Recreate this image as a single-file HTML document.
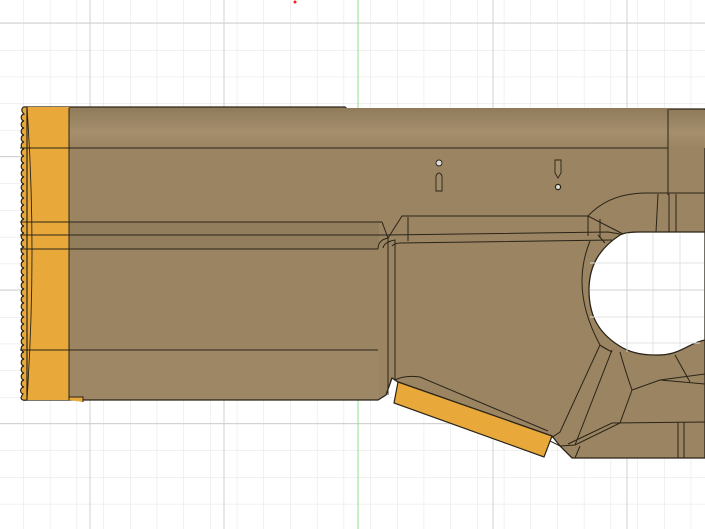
<!DOCTYPE html>
<html><head><style>
html,body{margin:0;padding:0;background:#fff;}
svg{display:block}
</style></head><body>
<svg width="705" height="529" viewBox="0 0 705 529" xmlns="http://www.w3.org/2000/svg">
<defs>
<pattern id="g" width="26.7" height="26.7" patternUnits="userSpaceOnUse" x="-3.5" y="-3.4">
<path d="M0,0 H26.7 M0,0 V26.7" stroke="#e3e3e3" stroke-width="1" fill="none"/>
</pattern>
<linearGradient id="top" x1="0" y1="0" x2="0" y2="1">
<stop offset="0" stop-color="#8f7a5a"/><stop offset="0.6" stop-color="#a58f6d"/><stop offset="1" stop-color="#9a8462"/>
</linearGradient>
</defs>
<rect width="705" height="529" fill="#fff"/>
<rect width="705" height="529" fill="url(#g)"/>
<g stroke="#d2d2d2" stroke-width="1">
<line x1="90" y1="0" x2="90" y2="529"/><line x1="224" y1="0" x2="224" y2="529"/>
<line x1="493" y1="0" x2="493" y2="529"/><line x1="627" y1="0" x2="627" y2="529"/>
<line x1="0" y1="290" x2="705" y2="290"/><line x1="0" y1="156.5" x2="705" y2="156.5"/><line x1="0" y1="423.5" x2="705" y2="423.5"/><line x1="0" y1="23" x2="705" y2="23"/>
</g>
<line x1="358" y1="0" x2="358" y2="529" stroke="#8fe08f" stroke-width="1"/>
<circle cx="295" cy="2" r="1.5" fill="#e22"/>

<!-- main body -->
<path d="M27,107 L345,107 L347,109 L705,109 L705,458 L572,458 L560,446 L552,436 L398,382 L392,378 L386,395 L378,400 L27,400 Z" fill="#9a8462" stroke="#2a2418" stroke-width="1.3"/>
<rect x="69" y="108" width="600" height="40" fill="url(#top)"/>
<rect x="668" y="110" width="37" height="38" fill="url(#top)"/>
<rect x="69" y="350" width="310" height="49" fill="#9d8765"/>
<rect x="69" y="222" width="310" height="27" fill="#927d5c"/>

<!-- orange butt -->
<path d="M27,107 L69,107 L69,400 L27,400 Z" fill="#e8a93a"/>
<path d="M27,107 C22,106 20,110 24,114
A3.6,3.6 0 0 0 24,121 A3.6,3.6 0 0 0 24,128 A3.6,3.6 0 0 0 24,135 A3.6,3.6 0 0 0 24,142 A3.6,3.6 0 0 0 24,149 A3.6,3.6 0 0 0 24,156 A3.6,3.6 0 0 0 24,163 A3.6,3.6 0 0 0 24,170 A3.6,3.6 0 0 0 24,177 A3.6,3.6 0 0 0 24,184 A3.6,3.6 0 0 0 24,191 A3.6,3.6 0 0 0 24,198 A3.6,3.6 0 0 0 24,205 A3.6,3.6 0 0 0 24,212 A3.6,3.6 0 0 0 24,219 A3.6,3.6 0 0 0 24,226 A3.6,3.6 0 0 0 24,233 A3.6,3.6 0 0 0 24,240 A3.6,3.6 0 0 0 24,247 A3.6,3.6 0 0 0 24,254 A3.6,3.6 0 0 0 24,261 A3.6,3.6 0 0 0 24,268 A3.6,3.6 0 0 0 24,275 A3.6,3.6 0 0 0 24,282 A3.6,3.6 0 0 0 24,289 A3.6,3.6 0 0 0 24,296 A3.6,3.6 0 0 0 24,303 A3.6,3.6 0 0 0 24,310 A3.6,3.6 0 0 0 24,317 A3.6,3.6 0 0 0 24,324 A3.6,3.6 0 0 0 24,331 A3.6,3.6 0 0 0 24,338 A3.6,3.6 0 0 0 24,345 A3.6,3.6 0 0 0 24,352 A3.6,3.6 0 0 0 24,359 A3.6,3.6 0 0 0 24,366 A3.6,3.6 0 0 0 24,373 A3.6,3.6 0 0 0 24,380 A3.6,3.6 0 0 0 24,387 A3.6,3.6 0 0 0 23,394
C19,399 22,401 27,400 Z" fill="#e8a93a" stroke="#2a2418" stroke-width="1.2"/>
<path d="M27,108 Q37,250 27,399" fill="none" stroke="#2a2418" stroke-width="0.9"/>
<path d="M69,400 L69,397 L83,397 L83,402" fill="#e8a93a" stroke="#2a2418" stroke-width="1"/>

<!-- body lines -->
<g stroke="#2a2418" stroke-width="1" fill="none">
<line x1="69" y1="108" x2="69" y2="400"/>
<line x1="20" y1="148" x2="668" y2="148"/>
<line x1="20" y1="350" x2="378" y2="350"/>
<line x1="20" y1="222" x2="382" y2="222"/>
<line x1="20" y1="235" x2="386" y2="235"/>
<line x1="20" y1="249" x2="378" y2="249"/>
<line x1="668" y1="109" x2="668" y2="195"/>
<path d="M382,222 L388,238 L402,216 L588,216 L625,235"/>
<path d="M386,235 L608,232 L620,234"/>
<path d="M378,249 Q378,240 388,238 L388,395"/>
<path d="M383,248 Q384,242 395,240 L395,380 Q405,375 420,377"/>
<path d="M392,246 Q395,243 400,243 L612,240"/>
<line x1="408" y1="217" x2="408" y2="241"/>
<line x1="588" y1="216" x2="588" y2="236"/>
<line x1="600" y1="219" x2="600" y2="238"/>
<path d="M588,216 Q610,192 650,193 L705,193"/>
<line x1="658" y1="194" x2="656" y2="232"/>
<line x1="669" y1="194" x2="669" y2="232"/>
<line x1="676" y1="194" x2="676" y2="232"/>
<path d="M590,241 Q570,290 600,345 L608,350"/>
<path d="M600,345 L560,432 L548,440 L560,446 L575,445 L620,423 L632,390 L660,380 L705,374"/>
<path d="M612,350 L575,445"/>
<path d="M620,352 Q625,370 632,390"/>
<path d="M660,380 L705,384"/>
<path d="M568,444 L612,423 L705,422"/>
<line x1="678" y1="422" x2="678" y2="458"/>
<line x1="684" y1="422" x2="684" y2="458"/>
<line x1="675" y1="355" x2="690" y2="382"/>
<line x1="580" y1="446" x2="575" y2="458"/>
<path d="M420,377 L548,431"/>
<path d="M598,235 L605,243"/>
<path d="M601,346 L612,352"/>
</g>

<!-- hole -->
<path d="M620,235 Q625,232 640,232 L705,232 L705,340 C688,343 680,356 655,355 C640,355 628,352 618,345 C598,332 589,315 589,290 C589,265 600,248 620,235 Z" fill="#fff" stroke="#2a2418" stroke-width="1.3"/>
<g stroke="#e3e3e3" stroke-width="1"><line x1="653" y1="233" x2="653" y2="354"/><line x1="680" y1="233" x2="680" y2="348"/><line x1="590" y1="263" x2="704" y2="263"/><line x1="590" y1="317" x2="704" y2="317"/><line x1="620" y1="343" x2="700" y2="343"/></g>
<line x1="627" y1="233" x2="627" y2="352" stroke="#d2d2d2"/>
<line x1="590" y1="290" x2="704" y2="290" stroke="#d2d2d2"/>

<!-- orange plate -->
<path d="M398,382 L552,436 L544,457 L394,403 Z" fill="#e8a93a" stroke="#2a2418" stroke-width="1.2"/>

<!-- small holes -->
<circle cx="439" cy="163" r="3" fill="#ddd" stroke="#2a2418" stroke-width="0.9"/>
<path d="M436,191 L436,176 Q439,170 442,176 L442,191 Z" fill="#a08a68" stroke="#2a2418" stroke-width="0.9"/>
<path d="M555,160 L561,160 L561,173 L558,178 L555,173 Z" fill="#a08a68" stroke="#2a2418" stroke-width="0.9"/>
<circle cx="558" cy="187" r="2.6" fill="#ddd" stroke="#2a2418" stroke-width="1.2"/>
</svg>
</body></html>
